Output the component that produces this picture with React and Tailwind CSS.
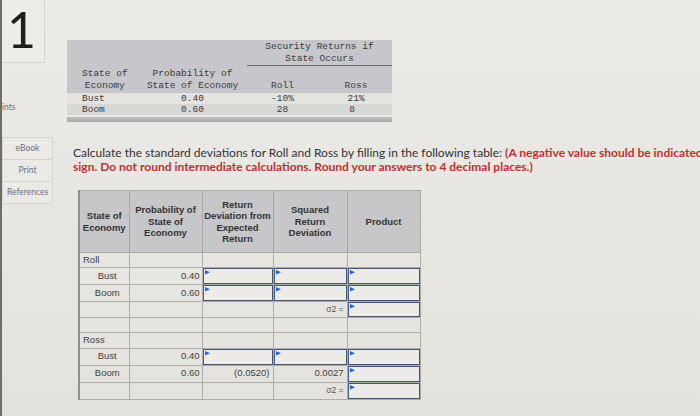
import React from "react";

function Marker() {
  return (
    <svg className="absolute left-[1px] top-[1px]" width="5" height="6" viewBox="0 0 5 6">
      <path d="M0 0 L5 2.2 L0 4.6 Z" fill="#2f5fd0" />
    </svg>
  );
}

function InputCell({ h = 16 }) {
  return (
    <td className="p-0 border border-[#a9a9a9]">
      <div
        className="relative w-full box-border border-[1.5px] border-[#4a5570] border-l-[#3b5ea6] bg-[#ecebe7]"
        style={{ height: h }}
      >
        <Marker />
      </div>
    </td>
  );
}

function Td({ children, className = "" }) {
  return <td className={"border border-[#adadad] p-0 " + className}>{children}</td>;
}

const topCols = "grid grid-cols-[73px_105px_75px_72px]";

export default function App() {
  return (
    <div className="w-[700px] h-[416px] overflow-hidden flex bg-gradient-to-b from-[#ecebe7] to-[#e3e2dd] text-[#333]">
      {/* sidebar */}
      <div className="w-[53px] shrink-0 border-l-[2px] border-[#6e6e6e] font-['Lato',sans-serif]">
        <div className="w-[43px] h-[63px] border-r border-b border-[#d5d4cf] bg-[#edece8] pl-[5px] overflow-hidden">
          <div className="text-[50px] leading-[58px] text-[#1f1f1f]">1</div>
        </div>
        <div className="mt-[38px] text-[8.5px] leading-[12px] text-[#6d6d6d]">ints</div>
        <div className="mt-[24px] w-[51px] border border-[#d6d5d0] bg-[#ebeae6] text-[8.5px] text-[#6b7088]">
          <div className="h-[22px] flex items-center justify-center border-b border-[#d6d5d0]">eBook</div>
          <div className="h-[22px] flex items-center justify-center border-b border-[#d6d5d0]">Print</div>
          <div className="h-[21px] flex items-center justify-center">References</div>
        </div>
      </div>

      {/* main */}
      <div className="flex-1 min-w-0 overflow-hidden">
        {/* top data table */}
        <div className="ml-[14px] mt-[40px] w-[325px] font-['Liberation_Mono',monospace] text-[9.5px] text-[#3a3a3a]">
          <div className="bg-[#c7c7cb] h-[53px] pt-[1px]">
            <div className="grid grid-cols-[73px_105px_147px]">
              <div />
              <div />
              <div className="ml-[2px] text-center leading-[12px] border-b border-[#6a6a6a]">
                <div>Security Returns if</div>
                <div>State Occurs</div>
              </div>
            </div>
            <div className={topCols + " items-end leading-[11.5px] mt-[2px]"}>
              <div className="pl-[15px] whitespace-nowrap">
                <div className="inline-block text-center">
                  State of<br />Economy
                </div>
              </div>
              <div className="text-center whitespace-nowrap">
                <div>Probability of</div>
                <div>State of Economy</div>
              </div>
              <div className="text-center">Roll</div>
              <div className="text-center">Ross</div>
            </div>
          </div>
          <div className={topCols + " h-[11px] leading-[11px] bg-[#e4e3df]"}>
            <div className="pl-[15px]">Bust</div>
            <div className="text-center">0.40</div>
            <div className="text-center">-10%</div>
            <div className="text-center">21%</div>
          </div>
          <div className={topCols + " h-[11px] leading-[11px] bg-[#d7d7d6]"}>
            <div className="pl-[15px]">Boom</div>
            <div className="text-center">0.60</div>
            <div className="text-center">28</div>
            <div className="text-center pr-[8px]">8</div>
          </div>
          <div className="mt-[2px] h-[5px] bg-gradient-to-b from-[#bdbdbd] to-[#a9a9a9]" />
        </div>

        {/* instructions */}
        <div className="ml-[20px] mt-[24px] font-['Lato',sans-serif] text-[12px] leading-[14px] whitespace-nowrap">
          <div className="text-[#333]">
            Calculate the standard deviations for Roll and Ross by filling in the following table:{" "}
            <span className="font-bold text-[#c0312b]">
              (A negative value should be indicated by a minus
            </span>
          </div>
          <div className="font-bold text-[#c0312b]">
            sign. Do not round intermediate calculations. Round your answers to 4 decimal places.)
          </div>
        </div>

        {/* answer table */}
        <table className="ml-[25px] mt-[16px] border-collapse table-fixed font-['Liberation_Sans',Arial,sans-serif] text-[9.5px] text-[#404040] border-l-[2px] border-l-[#8e8e8e]">
          <colgroup>
            <col style={{ width: 50 }} />
            <col style={{ width: 73 }} />
            <col style={{ width: 71 }} />
            <col style={{ width: 74 }} />
            <col style={{ width: 73 }} />
          </colgroup>
          <thead>
            <tr className="h-[62px] bg-[#c7c7c9] text-[#333] leading-[11.5px]">
              <th className="border border-[#a9a9a9] font-bold">State of<br />Economy</th>
              <th className="border border-[#a9a9a9] font-bold">Probability of<br />State of<br />Economy</th>
              <th className="border border-[#a9a9a9] font-bold">Return<br />Deviation from<br />Expected<br />Return</th>
              <th className="border border-[#a9a9a9] font-bold">Squared<br />Return<br />Deviation</th>
              <th className="border border-[#a9a9a9] font-bold">Product</th>
            </tr>
          </thead>
          <tbody>
            <tr className="h-[15px]">
              <Td className="pl-[3px]">Roll</Td>
              <Td /><Td /><Td /><Td />
            </tr>
            <tr className="h-[17px]">
              <Td className="text-center pl-[6px]">Bust</Td>
              <Td className="text-right pr-[2px]">0.40</Td>
              <InputCell /><InputCell /><InputCell />
            </tr>
            <tr className="h-[17px]">
              <Td className="text-center pl-[6px]">Boom</Td>
              <Td className="text-right pr-[2px]">0.60</Td>
              <InputCell /><InputCell /><InputCell />
            </tr>
            <tr className="h-[16px]">
              <Td /><Td /><Td />
              <Td className="text-right pr-[3px] text-[8.5px] text-[#555]">σ2 =</Td>
              <InputCell h={15} />
            </tr>
            <tr className="h-[15px]">
              <Td /><Td /><Td /><Td /><Td />
            </tr>
            <tr className="h-[15px]">
              <Td className="pl-[3px]">Ross</Td>
              <Td /><Td /><Td /><Td />
            </tr>
            <tr className="h-[17px]">
              <Td className="text-center pl-[6px]">Bust</Td>
              <Td className="text-right pr-[2px]">0.40</Td>
              <InputCell /><InputCell /><InputCell />
            </tr>
            <tr className="h-[17px]">
              <Td className="text-center pl-[6px]">Boom</Td>
              <Td className="text-right pr-[2px]">0.60</Td>
              <Td className="text-right pr-[3px]">(0.0520)</Td>
              <Td className="text-right pr-[3px]">0.0027</Td>
              <InputCell />
            </tr>
            <tr className="h-[17px]">
              <Td /><Td /><Td />
              <Td className="text-right pr-[3px] text-[8.5px] text-[#555]">σ2 =</Td>
              <InputCell />
            </tr>
          </tbody>
        </table>
      </div>
    </div>
  );
}
